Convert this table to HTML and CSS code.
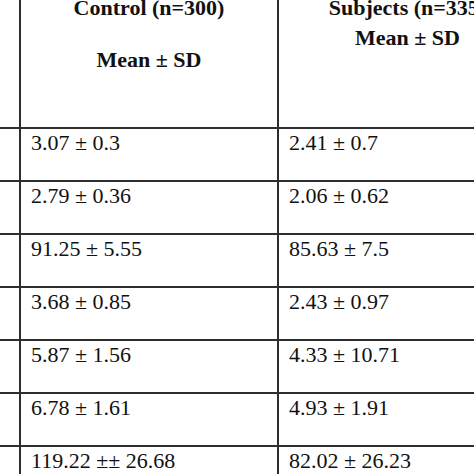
FILE: index.html
```html
<!DOCTYPE html>
<html lang="en">
<head>
<meta charset="utf-8">
<title>Table</title>
<link rel="stylesheet" href="styles.css">
</head>
<body>
<table class="stats">
  <colgroup>
    <col class="col-label">
    <col class="col-val">
    <col class="col-val">
  </colgroup>
  <thead>
    <tr>
      <th class="head-cell"><div class="head-box"></div></th>
      <th class="head-cell">
        <div class="head-box">
          <div class="head-line first">Control (n=300)</div>
          <div class="head-line gap-wide">Mean ± SD</div>
        </div>
      </th>
      <th class="head-cell">
        <div class="head-box">
          <div class="head-line first">Subjects (n=335)</div>
          <div class="head-line gap-narrow">Mean ± SD</div>
        </div>
      </th>
    </tr>
  </thead>
  <tbody>
    <tr><td></td><td>3.07 ± 0.3</td><td>2.41 ± 0.7</td></tr>
    <tr><td></td><td>2.79 ± 0.36</td><td>2.06 ± 0.62</td></tr>
    <tr><td></td><td>91.25 ± 5.55</td><td>85.63 ± 7.5</td></tr>
    <tr><td></td><td>3.68 ± 0.85</td><td>2.43 ± 0.97</td></tr>
    <tr><td></td><td>5.87 ± 1.56</td><td>4.33 ± 10.71</td></tr>
    <tr><td></td><td>6.78 ± 1.61</td><td>4.93 ± 1.91</td></tr>
    <tr><td></td><td>119.22 ±± 26.68</td><td>82.02 ± 26.23</td></tr>
  </tbody>
</table>
</body>
</html>
```

FILE: styles.css
```css
html, body {
  margin: 0;
  padding: 0;
  background: #ffffff;
  overflow: hidden;
  width: 474px;
  height: 474px;
}

.stats {
  border-collapse: collapse;
  table-layout: fixed;
  width: 536px;
  font-family: "Liberation Serif", "Times New Roman", serif;
  font-size: 22px;
  color: #111111;
}

.col-label { width: 20px; }
.col-val { width: 258px; }

.stats th,
.stats td {
  border: 2px solid #2e2e2e;
  padding: 0;
}

.stats tr:first-child th { border-top: none; }
.stats th:first-child,
.stats td:first-child { border-left: none; }
.stats th:last-child,
.stats td:last-child { border-right: none; }

.head-cell {
  vertical-align: top;
  font-weight: bold;
  text-align: center;
}

.head-box {
  height: 127px;
  white-space: nowrap;
}

.head-line {
  line-height: 30px;
}

.head-line.first {
  line-height: 16px;
}

.head-line.gap-wide { margin-top: 29px; }
.head-line.gap-narrow { margin-top: 7px; }

.stats td {
  vertical-align: top;
  text-align: left;
  white-space: nowrap;
  line-height: 24px;
  padding: 2px 0 25px 10px;
}

.stats td:first-child { padding-left: 0; }
```
